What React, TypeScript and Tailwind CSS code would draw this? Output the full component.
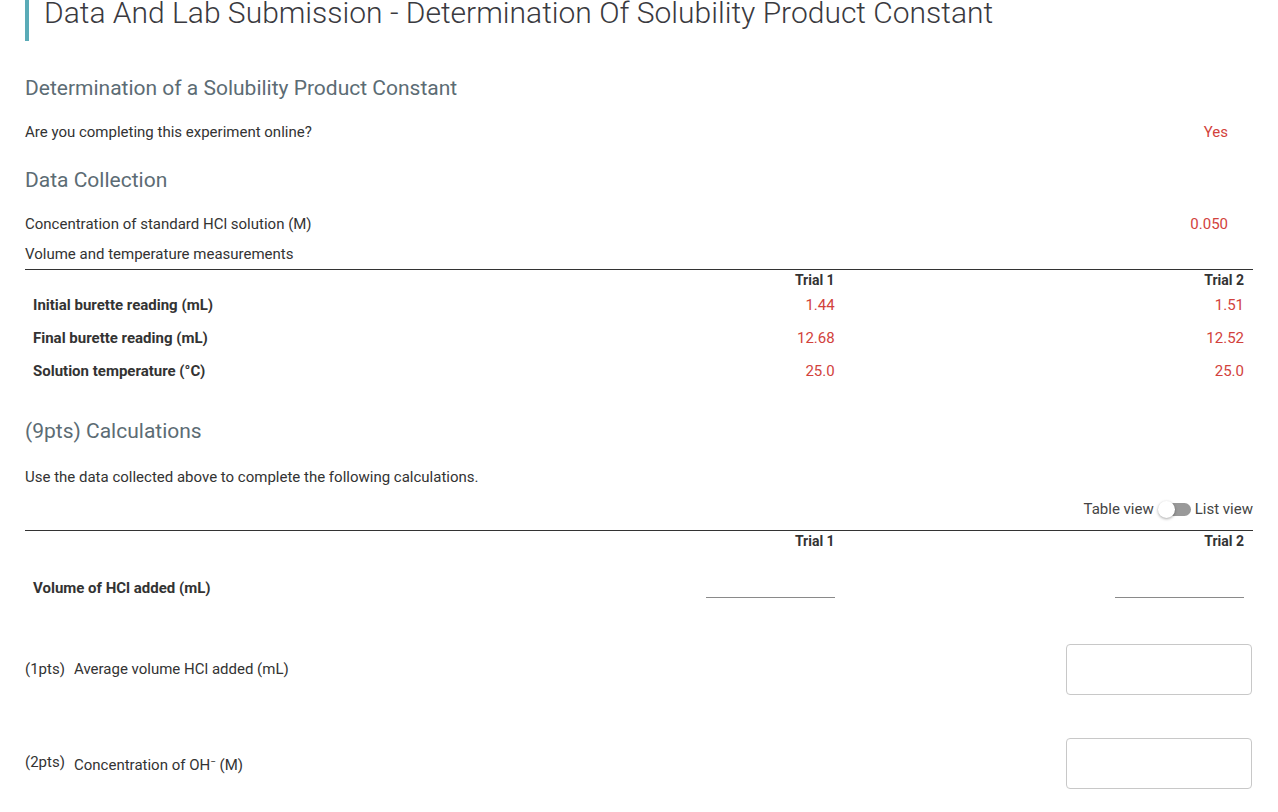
import React from "react";

const RED = "text-[#d2423c]";

function Heading({ children, className = "" }: { children: React.ReactNode; className?: string }) {
  return <h2 className={`text-[21px] leading-[28px] font-normal text-[#5c6c74] ${className}`}>{children}</h2>;
}

function DataRow({ label, t1, t2 }: { label: string; t1: string; t2: string }) {
  return (
    <div className="grid grid-cols-3 h-[33px] items-center">
      <div className="pl-2 font-bold text-[#333]">{label}</div>
      <div className={`text-right pr-[9px] ${RED}`}>{t1}</div>
      <div className={`text-right pr-[9px] ${RED}`}>{t2}</div>
    </div>
  );
}

export default function App() {
  return (
    <div className="w-[1278px] bg-white px-[25px] pb-6 text-[#333] text-[15px]" style={{ fontFamily: "Roboto, 'Liberation Sans', sans-serif" }}>
      <div className="mt-[-5px] border-l-4 border-[#5aabb7] pl-[15px] pb-[10px]">
        <h1 className="text-[30px] leading-[36px] font-light text-[#3a3a40]">
          Data And Lab Submission - Determination Of Solubility Product Constant
        </h1>
      </div>

      <Heading className="mt-[33px]">Determination of a Solubility Product Constant</Heading>
      <div className="mt-[20px] flex justify-between leading-[20px] pr-[25px]">
        <span>Are you completing this experiment online?</span>
        <span className={RED}>Yes</span>
      </div>

      <Heading className="mt-[24px]">Data Collection</Heading>
      <div className="mt-[20px] flex justify-between leading-[20px] pr-[25px]">
        <span>Concentration of standard HCl solution (M)</span>
        <span className={RED}>0.050</span>
      </div>
      <div className="mt-[10px] leading-[20px]">Volume and temperature measurements</div>

      <div className="mt-[5px] border-t border-[#333]">
        <div className="grid grid-cols-3 h-[19px] items-center font-bold text-[14px]">
          <div />
          <div className="text-right pr-[9px]">Trial 1</div>
          <div className="text-right pr-[9px]">Trial 2</div>
        </div>
        <DataRow label="Initial burette reading (mL)" t1="1.44" t2="1.51" />
        <DataRow label="Final burette reading (mL)" t1="12.68" t2="12.52" />
        <DataRow label="Solution temperature (°C)" t1="25.0" t2="25.0" />
      </div>

      <Heading className="mt-[29px]">(9pts) Calculations</Heading>
      <div className="mt-[22px] leading-[20px]">Use the data collected above to complete the following calculations.</div>

      <div className="mt-[12px] h-[20px] flex items-center justify-end text-[#444]">
        <span>Table view</span>
        <span className="relative mx-[4px] w-[33px] h-[18px] flex items-center">
          <span className="absolute left-[6px] right-0 h-[13px] rounded-full bg-[#999]" />
          <span className="absolute left-0 w-[17px] h-[17px] rounded-full bg-white shadow-[0_1px_3px_rgba(0,0,0,0.35)]" />
        </span>
        <span>List view</span>
      </div>

      <div className="mt-[11px] border-t border-[#333]">
        <div className="grid grid-cols-3 h-[17px] items-center font-bold text-[14px]">
          <div />
          <div className="text-right pr-[9px]">Trial 1</div>
          <div className="text-right pr-[9px]">Trial 2</div>
        </div>
        <div className="grid grid-cols-3 h-[80px] items-center">
          <div className="pl-2 font-bold">Volume of HCl added (mL)</div>
          <div className="flex justify-end pr-[9px]">
            <input className="w-[129px] h-[20px] border-b border-[#8a8a8a] outline-none bg-transparent" aria-label="Trial 1 volume" />
          </div>
          <div className="flex justify-end pr-[9px]">
            <input className="w-[129px] h-[20px] border-b border-[#8a8a8a] outline-none bg-transparent" aria-label="Trial 2 volume" />
          </div>
        </div>
      </div>

      <div className="mt-[16px] flex items-center justify-between">
        <div className="flex items-center">
          <span className="w-[49px]">(1pts)</span>
          <span>Average volume HCl added (mL)</span>
        </div>
        <input className="w-[186px] h-[51px] mr-px rounded-[4px] border border-[#c8c8c8] outline-none" aria-label="Average volume" />
      </div>

      <div className="mt-[43px] flex items-center justify-between">
        <div className="flex items-center">
          <span className="w-[49px] -mt-[2px]">(2pts)</span>
          <span className="mt-[4px]">
            Concentration of OH<sup className="text-[10px]">−</sup> (M)
          </span>
        </div>
        <input className="w-[186px] h-[51px] mr-px rounded-[4px] border border-[#c8c8c8] outline-none" aria-label="Concentration of OH" />
      </div>
    </div>
  );
}
